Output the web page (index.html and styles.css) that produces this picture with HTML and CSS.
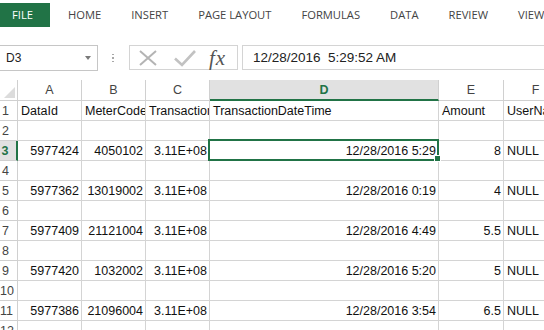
FILE: index.html
```html
<!DOCTYPE html>
<html lang="en">
<head>
    <meta charset="UTF-8">
    <title>Book1 - Excel</title>
    <link rel="stylesheet" href="styles.css">
</head>
<body>
    <div class="tabs">
        <span class="tab tab-file">FILE</span>
        <span class="tab">HOME</span>
        <span class="tab">INSERT</span>
        <span class="tab">PAGE LAYOUT</span>
        <span class="tab">FORMULAS</span>
        <span class="tab">DATA</span>
        <span class="tab">REVIEW</span>
        <span class="tab">VIEW</span>
    </div>

    <div class="formula-bar">
        <div class="name-box"><span>D3</span><span class="caret"></span></div>
        <div class="grip"></div>
        <div class="fx-box">
            <svg class="icon-cancel" width="20" height="18" viewBox="0 0 20 18">
                <path d="M2 2 L18 16 M18 2 L2 16" stroke="#b4b4b4" stroke-width="2" fill="none"/>
            </svg>
            <svg class="icon-enter" width="22" height="18" viewBox="0 0 22 18">
                <path d="M1 9.5 L8 16 L21 2" stroke="#c2c2c2" stroke-width="2.6" fill="none"/>
            </svg>
            <span class="fx">fx</span>
        </div>
        <div class="formula-input">12/28/2016  5:29:52 AM</div>
    </div>

    <div class="sheet">
        <div class="row head">
            <div class="cell corner"><span class="corner-mark"></span></div>
            <div class="cell">A</div>
            <div class="cell">B</div>
            <div class="cell">C</div>
            <div class="cell active-col">D</div>
            <div class="cell">E</div>
            <div class="cell">F</div>
        </div>
        <div class="row">
            <div class="cell num">1</div>
            <div class="cell">DataId</div>
            <div class="cell">MeterCode</div>
            <div class="cell">TransactionId</div>
            <div class="cell">TransactionDateTime</div>
            <div class="cell">Amount</div>
            <div class="cell">UserName</div>
        </div>
        <div class="row">
            <div class="cell num">2</div>
            <div class="cell"></div><div class="cell"></div><div class="cell"></div><div class="cell"></div><div class="cell"></div><div class="cell"></div>
        </div>
        <div class="row">
            <div class="cell num active-row">3</div>
            <div class="cell right">5977424</div>
            <div class="cell right">4050102</div>
            <div class="cell right">3.11E+08</div>
            <div class="cell right selected">12/28/2016 5:29</div>
            <div class="cell right">8</div>
            <div class="cell">NULL</div>
        </div>
        <div class="row">
            <div class="cell num">4</div>
            <div class="cell"></div><div class="cell"></div><div class="cell"></div><div class="cell"></div><div class="cell"></div><div class="cell"></div>
        </div>
        <div class="row">
            <div class="cell num">5</div>
            <div class="cell right">5977362</div>
            <div class="cell right">13019002</div>
            <div class="cell right">3.11E+08</div>
            <div class="cell right">12/28/2016 0:19</div>
            <div class="cell right">4</div>
            <div class="cell">NULL</div>
        </div>
        <div class="row">
            <div class="cell num">6</div>
            <div class="cell"></div><div class="cell"></div><div class="cell"></div><div class="cell"></div><div class="cell"></div><div class="cell"></div>
        </div>
        <div class="row">
            <div class="cell num">7</div>
            <div class="cell right">5977409</div>
            <div class="cell right">21121004</div>
            <div class="cell right">3.11E+08</div>
            <div class="cell right">12/28/2016 4:49</div>
            <div class="cell right">5.5</div>
            <div class="cell">NULL</div>
        </div>
        <div class="row">
            <div class="cell num">8</div>
            <div class="cell"></div><div class="cell"></div><div class="cell"></div><div class="cell"></div><div class="cell"></div><div class="cell"></div>
        </div>
        <div class="row">
            <div class="cell num">9</div>
            <div class="cell right">5977420</div>
            <div class="cell right">1032002</div>
            <div class="cell right">3.11E+08</div>
            <div class="cell right">12/28/2016 5:20</div>
            <div class="cell right">5</div>
            <div class="cell">NULL</div>
        </div>
        <div class="row">
            <div class="cell num">10</div>
            <div class="cell"></div><div class="cell"></div><div class="cell"></div><div class="cell"></div><div class="cell"></div><div class="cell"></div>
        </div>
        <div class="row">
            <div class="cell num">11</div>
            <div class="cell right">5977386</div>
            <div class="cell right">21096004</div>
            <div class="cell right">3.11E+08</div>
            <div class="cell right">12/28/2016 3:54</div>
            <div class="cell right">6.5</div>
            <div class="cell">NULL</div>
        </div>
        <div class="row">
            <div class="cell num">12</div>
            <div class="cell"></div><div class="cell"></div><div class="cell"></div><div class="cell"></div><div class="cell"></div><div class="cell"></div>
        </div>
    </div>
</body>
</html>
```

FILE: styles.css
```css
body {
    margin: 0;
    width: 544px;
    height: 330px;
    overflow: hidden;
    background-color: #fff;
    font-family: "Liberation Sans", Arial, sans-serif;
}

/* ribbon tabs */
.tabs {
    display: flex;
    padding-top: 3px;
    height: 24px;
    font-family: "Open Sans", sans-serif;
    font-size: 11.2px;
    color: #444;
    white-space: nowrap;
}

.tab {
    line-height: 24px;
    padding: 0 15px;
}

.tab-file {
    background-color: #217346;
    color: #fff;
    padding: 0 17px 0 12px;
    margin-right: 3px;
}

/* formula bar */
.formula-bar {
    display: flex;
    height: 26px;
    margin-top: 18px;
}

.name-box {
    width: 99px;
    margin-left: -1px;
    box-sizing: border-box;
    border: 1px solid #c6c6c6;
    display: flex;
    align-items: center;
    justify-content: space-between;
    padding: 0 6px;
    font-size: 12px;
    color: #222;
}

.caret {
    border-top: 4px solid #7a7a7a;
    border-left: 3.5px solid transparent;
    border-right: 3.5px solid transparent;
}

.grip {
    width: 2px;
    height: 9px;
    margin: 9px 15px 0 14px;
    background: repeating-linear-gradient(#a8a8a8 0 1.5px, transparent 1.5px 3.5px);
}

.fx-box {
    width: 109px;
    height: 25px;
    box-sizing: border-box;
    border: 1px solid #d4d4d4;
    display: flex;
    align-items: center;
}

.icon-cancel {
    margin-left: 8px;
}

.icon-enter {
    margin-left: 16px;
}

.fx {
    margin-left: 13px;
    font-family: "Liberation Serif", serif;
    font-style: italic;
    font-size: 21px;
    letter-spacing: 1px;
    line-height: 22px;
    color: #555;
}

.formula-input {
    flex: 1;
    margin-left: 4px;
    height: 25px;
    box-sizing: border-box;
    border: 1px solid #d4d4d4;
    border-right: none;
    padding-left: 10px;
    font-size: 13.5px;
    line-height: 23px;
    color: #222;
    white-space: pre;
}

/* worksheet grid */
.sheet {
    margin-top: 9px;
    font-size: 12.5px;
}

.row {
    display: grid;
    grid-template-columns: 18px 64px 64px 64px 229px 65px 64px;
    height: 20px;
}

.cell {
    box-sizing: border-box;
    border-right: 1px solid #d4d4d4;
    border-bottom: 1px solid #d4d4d4;
    padding: 2px 2px 0 3px;
    line-height: 17px;
    white-space: nowrap;
    overflow: hidden;
    color: #111;
}

.right {
    text-align: right;
}

.head {
    height: 21px;
}

.head .cell {
    padding: 0;
    line-height: 20px;
    text-align: center;
    color: #444;
    border-color: #d0d0d0;
}

.corner {
    position: relative;
}

.corner-mark {
    position: absolute;
    right: 2px;
    bottom: 2px;
    border-bottom: 11px solid #dcdcdc;
    border-left: 11px solid transparent;
}

.head .active-col {
    background-color: #e1e1e1;
    border-bottom: 2px solid #217346;
    color: #217346;
    font-weight: bold;
}

.num {
    padding: 2px 6px 0 0;
    text-align: center;
    overflow: visible;
    color: #444;
    border-color: #d0d0d0;
}

.active-row {
    background-color: #e1e1e1;
    border-right: 2px solid #217346;
    color: #217346;
    font-weight: bold;
}

.selected {
    position: relative;
    overflow: visible;
}

.selected::after {
    content: "";
    position: absolute;
    top: -2px;
    left: -2px;
    right: -1px;
    bottom: -1px;
    border: 2px solid #217346;
}

.selected::before {
    content: "";
    position: absolute;
    right: -3px;
    bottom: -2px;
    width: 5px;
    height: 5px;
    background-color: #217346;
    border: 1px solid #fff;
    z-index: 1;
}
```
